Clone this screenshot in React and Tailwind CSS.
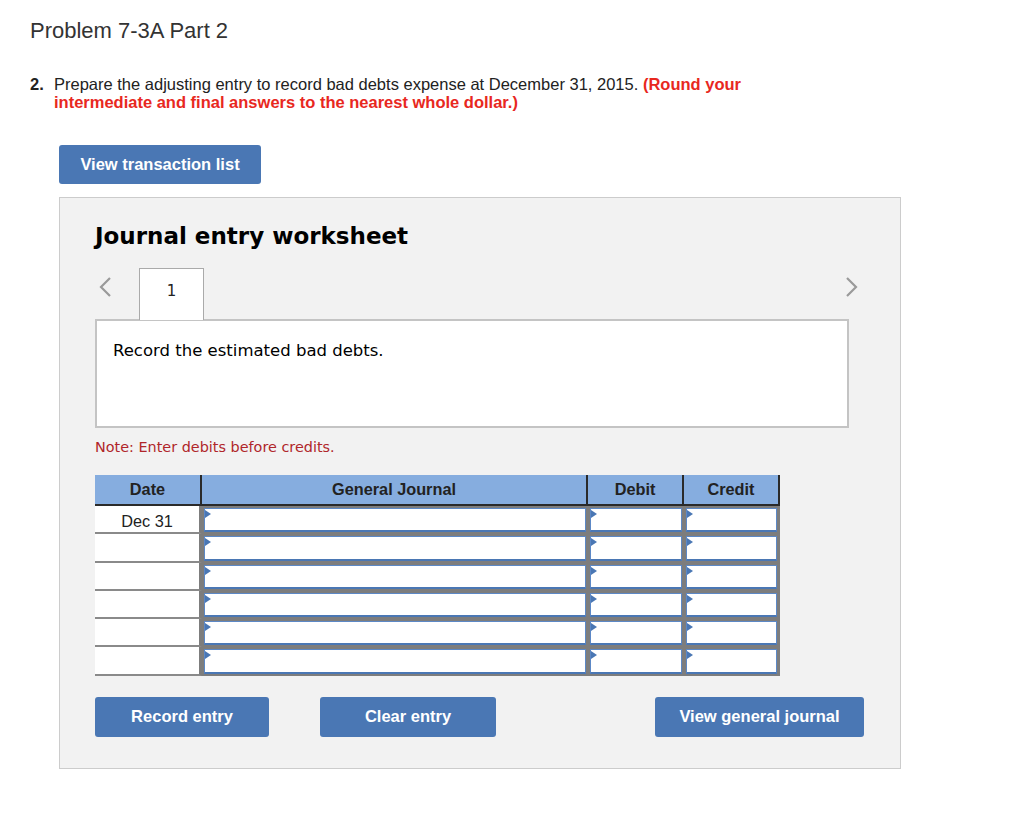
import React from 'react';

const sans = { fontFamily: '"Liberation Sans", Arial, sans-serif' };
const verdana = { fontFamily: '"DejaVu Sans", Verdana, sans-serif' };

function InputCell({ w, last }) {
  return (
    <div className={`${w} h-full bg-[#7d7d7d] p-[2px] ${last ? 'pr-[3px]' : ''}`}>
      <div className="relative h-full bg-white border border-[#5c88c6] border-b-2 border-b-[#4a77b4]">
        <span className="absolute left-0 top-[1px] w-0 h-0 border-y-[4px] border-y-transparent border-l-[6px] border-l-[#4a77b4]" />
      </div>
    </div>
  );
}

export default function App() {
  const rows = ['Dec 31', '', '', '', '', ''];

  return (
    <div className="w-[1024px] h-[835px] bg-white text-[#222]" style={sans}>
      <div className="pl-[30px] pt-[19px]">
        <h1 className="text-[22px] leading-[24px] text-[#333]">Problem 7-3A Part 2</h1>

        <div className="mt-[33px] flex text-[16.5px] leading-[17.5px] text-[#222]">
          <span className="w-[24px] font-bold">2.</span>
          <p>
            Prepare the adjusting entry to record bad debts expense at December 31, 2015.{' '}
            <span className="font-bold text-[#e8281e]">(Round your</span>
            <br />
            <span className="font-bold text-[#e8281e]">intermediate and final answers to the nearest whole dollar.)</span>
          </p>
        </div>

        <button className="mt-[34px] ml-[29px] w-[202px] h-[39px] rounded-[3px] bg-[#4a77b4] text-white font-bold text-[16.5px]">
          View transaction list
        </button>

        <div className="mt-[13px] ml-[29px] w-[842px] h-[572px] bg-[#f2f2f2] border border-[#cccccc] pl-[35px] pt-[24px]">
          <h2 className="text-[23px] leading-[28px] font-bold text-black" style={verdana}>
            Journal entry worksheet
          </h2>

          <div className="mt-[18px] w-[754px] flex items-end relative">
            <span className="absolute left-[3px] top-[7px]">
              <svg width="16" height="24" viewBox="0 0 16 24" fill="none" stroke="#9a9a9a" strokeWidth="2.2">
                <path d="M12 3 L3 12 L12 21" />
              </svg>
            </span>
            <div className="ml-[44px] w-[65px] h-[52px] bg-white border border-[#aaaaaa] border-b-0 flex justify-center pt-[11px] text-[15px] relative z-10 -mb-[1px]" style={verdana}>
              1
            </div>
            <span className="absolute right-[-10px] top-[7px]">
              <svg width="16" height="24" viewBox="0 0 16 24" fill="none" stroke="#9a9a9a" strokeWidth="2.2">
                <path d="M4 3 L13 12 L4 21" />
              </svg>
            </span>
          </div>
          <div className="w-[754px] h-[109px] bg-white border-2 border-[#c4c4c4] pl-[16px] pt-[18px] text-[16.5px] text-black" style={verdana}>
            Record the estimated bad debts.
          </div>

          <p className="mt-[9px] text-[14.4px] leading-[20px] text-[#b0262a]" style={verdana}>
            Note: Enter debits before credits.
          </p>

          <div className="mt-[18px] w-[685px]">
            <div className="flex h-[31px] bg-[#86addf] border-b-2 border-[#2a2a2a] font-bold text-[16.3px] text-[#222]">
              <div className="w-[107px] flex items-center justify-center border-r-2 border-[#2a2a2a]">Date</div>
              <div className="w-[386px] flex items-center justify-center border-r-2 border-[#2a2a2a]">General Journal</div>
              <div className="w-[96px] flex items-center justify-center border-r-2 border-[#2a2a2a]">Debit</div>
              <div className="w-[96px] flex items-center justify-center border-r-2 border-[#2a2a2a]">Credit</div>
            </div>
            {rows.map((d, i) => (
              <div key={i} className="flex h-[28.3px]">
                <div className="w-[107px] h-full bg-white border-b-2 border-[#8a8a8a] border-r-[3px] border-r-[#7d7d7d] flex items-start justify-center pt-[3px] text-[16.3px] text-[#222]">
                  {d}
                </div>
                <InputCell w="w-[386px]" />
                <InputCell w="w-[96px]" />
                <InputCell w="w-[96px]" last />
              </div>
            ))}
          </div>

          <div className="mt-[21px] w-[769px] flex">
            <button className="w-[174px] h-[40px] rounded-[3px] bg-[#4a77b4] text-white font-bold text-[16.5px]">
              Record entry
            </button>
            <button className="ml-[51px] w-[176px] h-[40px] rounded-[3px] bg-[#4a77b4] text-white font-bold text-[16.5px]">
              Clear entry
            </button>
            <button className="ml-auto w-[209px] h-[40px] rounded-[3px] bg-[#4a77b4] text-white font-bold text-[16.5px]">
              View general journal
            </button>
          </div>
        </div>
      </div>
    </div>
  );
}
